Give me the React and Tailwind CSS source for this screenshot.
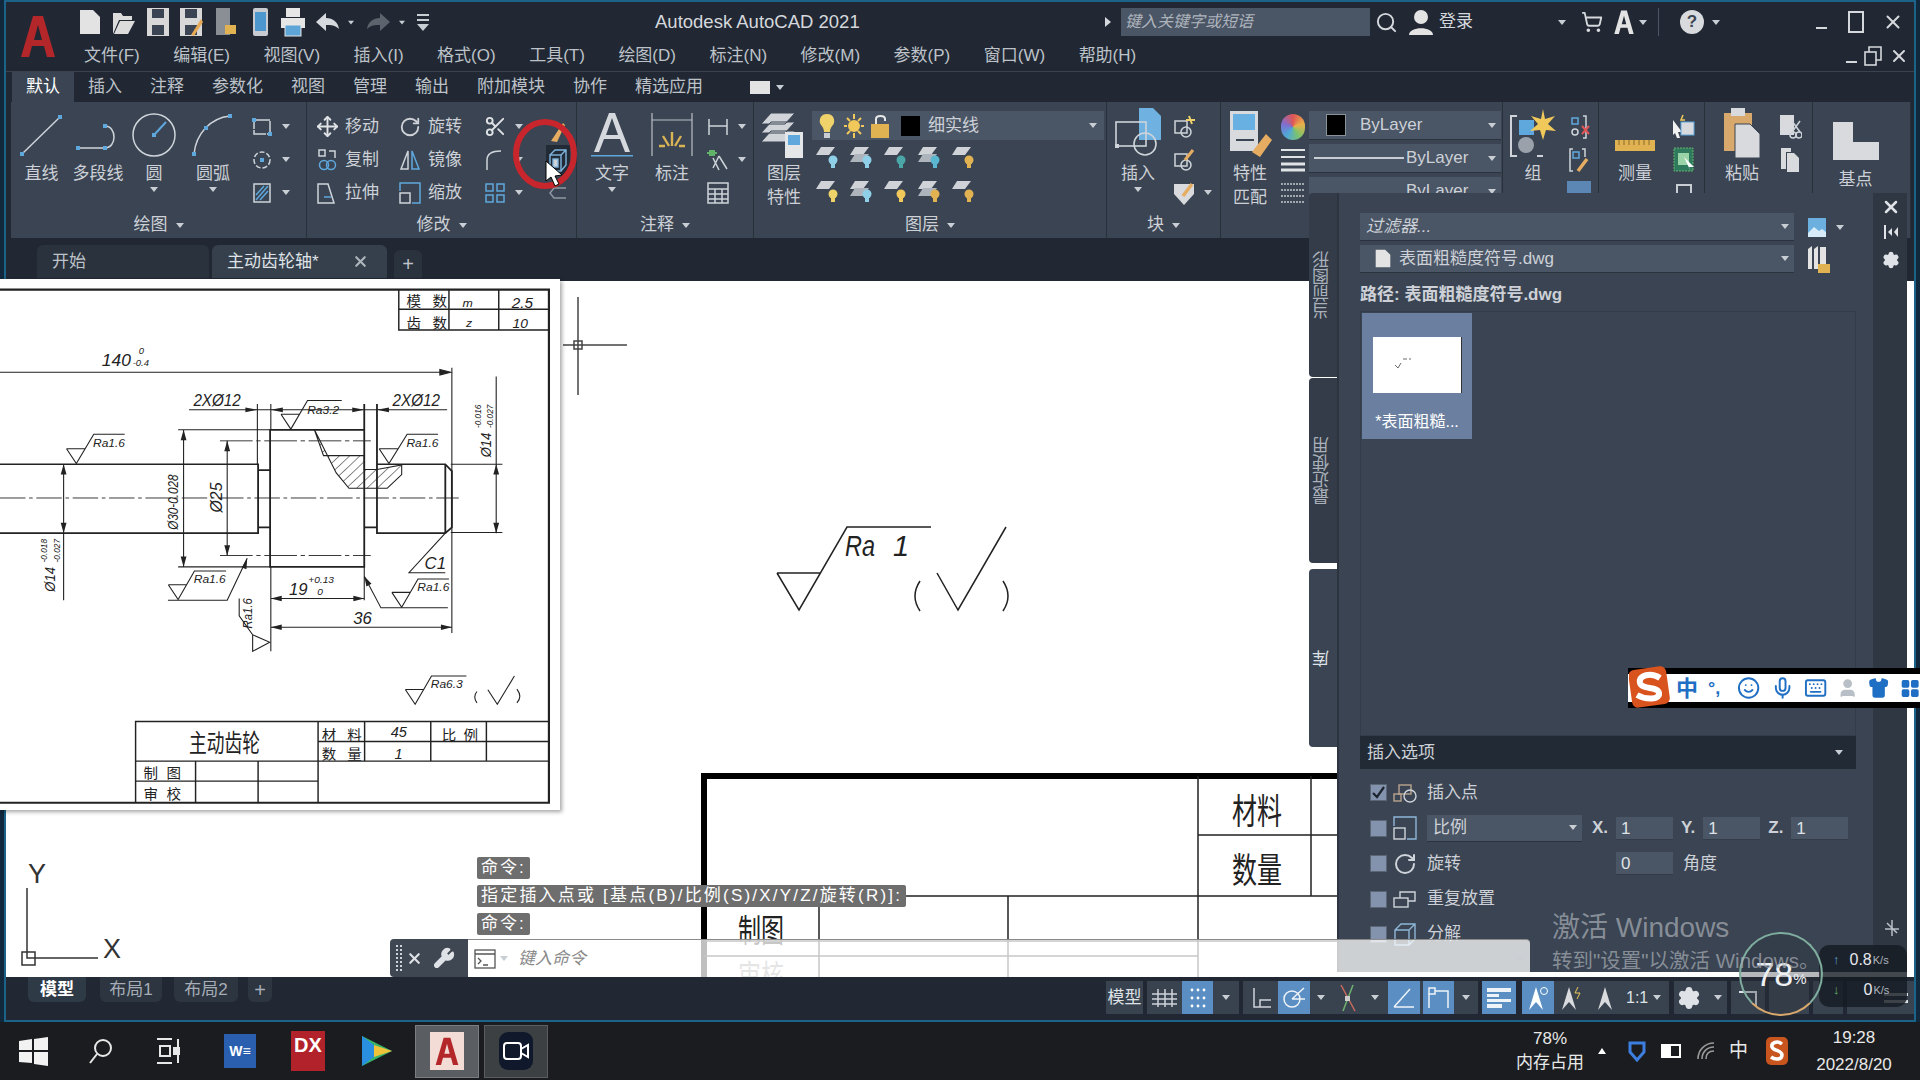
import React from "react";
import { Search, ShoppingCart, Wrench, Smile, Mic, Keyboard, Shirt, LayoutGrid, Settings, Scissors, X, Move, RotateCw, User } from "lucide-react";

const Caret = ({ className = "" }) => (
  <span className={"inline-block w-0 h-0 border-x-[4px] border-t-[5px] border-x-transparent border-t-[#c9ced5] " + className} />
);

const Svg = ({ w = 24, h = 24, children, sw = 1.5, color = "#cfd4da" }) => (
  <svg width={w} height={h} viewBox={`0 0 ${w} ${h}`} fill="none" stroke={color} strokeWidth={sw} className="shrink-0">
    {children}
  </svg>
);

const Node = ({ x, y }) => <rect x={x - 2} y={y - 2} width="4" height="4" fill="#5fa8dd" stroke="none" />;

const Logo = () => (
  <svg width="36" height="42" viewBox="0 0 36 42">
    <path d="M1 42 L13 1 H23 L35 42 H27 L24 31 H12 L9 42 Z M14 25 H22 L18 10 Z" fill="#b3262a" fillRule="evenodd" />
  </svg>
);

const Doc = ({ w = 22, h = 26, fill = "#e3e3e3" }) => (
  <svg width={w} height={h} viewBox="0 0 22 26"><path d="M1 1 H14 L21 8 V25 H1 Z" fill={fill} /></svg>
);

const Floppy = ({ pen }) => (
  <svg width="24" height="30" viewBox="0 0 24 30">
    <path d="M1 1 H23 V29 H1 Z" fill="#d8d8d8" />
    <rect x="6" y="2" width="12" height="9" fill="#3a4452" />
    <rect x="6" y="18" width="12" height="10" fill="#3a4452" />
    {pen && <path d="M12 28 L22 12 L24 15 L15 29 Z" fill="#e8a955" />}
  </svg>
);

const QuickIcons = () => (
  <div className="flex items-center h-full">
    <Doc w={24} h={26} />
    <svg className="ml-[10px]" width="23" height="26" viewBox="0 0 23 26"><path d="M1 4 H9 L11 7 H20 V11 H7 L1 25 Z M8 12 H23 L16 25 H2 Z" fill="#dcdcdc" /></svg>
    <div className="ml-[11px]"><Floppy /></div>
    <div className="ml-[9px]"><Floppy pen /></div>
    <svg className="ml-[12px]" width="22" height="30" viewBox="0 0 22 30"><rect x="1" y="1" width="14" height="27" fill="#8a8f96" /><rect x="10" y="18" width="11" height="9" fill="#e0b252" /></svg>
    <svg className="ml-[15px]" width="17" height="30" viewBox="0 0 17 30"><rect x="1" y="1" width="15" height="28" rx="2" fill="#c8ccd0" /><rect x="3" y="5" width="11" height="19" fill="#4d97cf" /></svg>
    <svg className="ml-[12px]" width="24" height="30" viewBox="0 0 24 30"><rect x="5" y="1" width="14" height="9" fill="#e6e6e6" /><rect x="0" y="11" width="24" height="10" fill="#e6e6e6" /><rect x="4" y="18" width="16" height="11" fill="#5fa6d8" stroke="#e6e6e6" /></svg>
    <svg className="ml-[11px]" width="23" height="20" viewBox="0 0 23 20"><path d="M0 10 L10 1 V6 C17 6 22 10 23 17 C19 13 15 13 10 13 V19 Z" fill="#d6d9dd" /></svg>
    <Caret className="ml-[8px] scale-75" />
    <svg className="ml-[12px]" width="23" height="20" viewBox="0 0 23 20"><path d="M23 10 L13 1 V6 C6 6 1 10 0 17 C4 13 8 13 13 13 V19 Z" fill="#5c636d" /></svg>
    <Caret className="ml-[8px] scale-75" />
    <svg className="ml-[11px]" width="12" height="18" viewBox="0 0 12 18"><path d="M0 1 H12 V3 H0 Z M0 6 H12 V8 H0 Z M0 11 H12 L6 18 Z" fill="#c9ced5" /></svg>
  </div>
);

const menus = ["文件(F)", "编辑(E)", "视图(V)", "插入(I)", "格式(O)", "工具(T)", "绘图(D)", "标注(N)", "修改(M)", "参数(P)", "窗口(W)", "帮助(H)"];
const tabs = ["默认", "插入", "注释", "参数化", "视图", "管理", "输出", "附加模块", "协作", "精选应用"];

const WinButtons = ({ small }) =>
  small ? (
    <div className="flex items-center gap-[7px] ml-auto mr-[5px] text-[#d5d8dc]">
      <span className="w-[11px] h-[2px] bg-[#d5d8dc] mt-[12px]" />
      <svg width="18" height="20" viewBox="0 0 18 20" fill="none" stroke="#d5d8dc" strokeWidth="1.6"><rect x="1" y="6" width="11" height="13" /><path d="M5 6 V1 H17 V14 H12" /></svg>
      <X size={20} strokeWidth={2.4} />
    </div>
  ) : (
    <div className="flex items-center text-[#d5d8dc]">
      <span className="w-[11px] h-[2px] bg-[#d5d8dc] mt-[12px]" />
      <span className="ml-[21px] w-[16px] h-[22px] border-2 border-[#d5d8dc]" />
      <X className="ml-[18px]" size={22} strokeWidth={2.2} />
    </div>
  );

const Panel = ({ label, className, children, noArrow }) => (
  <div className={"flex flex-col h-full bg-[#3a4452] border-r border-[#28303a] " + className}>
    <div className="flex h-[110px] pt-[8px]">{children}</div>
    <div className="h-[26px] flex items-center justify-center gap-[8px] text-[17px] text-[#cdd1d7]">
      {label}
      {!noArrow && <Caret />}
    </div>
  </div>
);

const BigTool = ({ icon, lines, arrow, className = "" }) => (
  <div className={"flex flex-col items-center shrink-0 " + className}>
    <div className="h-[48px] flex items-end justify-center">{icon}</div>
    <div className="mt-[4px] flex flex-col items-center text-[17px] leading-[24px] text-[#cdd1d7]">
      {lines.map((l) => (
        <span key={l}>{l}</span>
      ))}
      {arrow && <Caret className="mt-[1px]" />}
    </div>
  </div>
);

const Tool = ({ icon, label, caret }) => (
  <div className="flex items-center gap-[6px] h-[33px]">
    <div className="w-[24px] flex justify-center">{icon}</div>
    {label && <span className="text-[17px] text-[#cdd1d7]">{label}</span>}
    {caret && <Caret className="ml-[2px]" />}
  </div>
);

const LayerIcon = ({ accent = "#8fd0e8", second }) => (
  <svg width="26" height="24" viewBox="0 0 26 24">
    <path d="M6 2 H20 L14 10 H1 Z" fill="#cfd3d8" />
    {second && <path d="M6 9 H20 L14 17 H1 Z" fill="#aeb4bb" />}
    <circle cx="18" cy="15" r="4.5" fill={accent} />
    <rect x="16" y="19" width="4" height="4" fill={accent} />
  </svg>
);

const LayerRow = ({ accents }) => (
  <div className="flex h-[34px] items-center gap-[8px] pl-[3px]">
    {accents.map((a, i) => (
      <LayerIcon key={i} accent={a} second={i % 2 === 1} />
    ))}
  </div>
);

const Drop = ({ className = "", children }) => (
  <div className={"flex items-center bg-[#4a5565] border-b border-[#2a323d] text-[17px] text-[#cdd1d7] " + className}>
    {children}
    <Caret className="ml-auto mr-[5px]" />
  </div>
);

const Ribbon = () => (
  <div className="flex h-[136px] pl-[5px] shrink-0">
    <Panel label="绘图" className="w-[296px]">
      <BigTool className="w-[57px] ml-[2px]" lines={["直线"]} icon={<Svg w={46} h={46}><line x1="3" y1="42" x2="41" y2="5" /><Node x={3} y={42} /><Node x={41} y={5} /></Svg>} />
      <BigTool className="w-[56px]" lines={["多段线"]} icon={<Svg w={46} h={46}><path d="M3 36 H30 C42 36 42 14 30 14" /><Node x={3} y={36} /><Node x={30} y={36} /><Node x={30} y={14} /></Svg>} />
      <BigTool className="w-[56px]" lines={["圆"]} arrow icon={<Svg w={46} h={46}><circle cx="23" cy="23" r="21" /><path d="M23 23 L35 10" stroke="#5fa8dd" strokeWidth="2" /><Node x={23} y={23} /></Svg>} />
      <BigTool className="w-[62px]" lines={["圆弧"]} arrow icon={<Svg w={46} h={46}><path d="M4 42 C6 22 20 6 40 4" /><Node x={4} y={42} /><Node x={16} y={16} /><Node x={40} y={4} /></Svg>} />
      <div className="ml-[6px]">
        <Tool caret icon={<Svg w={22} h={22}><rect x="3" y="4" width="16" height="14" strokeDasharray="16 1" /><Node x={3} y={4} /><Node x={19} y={18} /></Svg>} />
        <Tool caret icon={<Svg w={22} h={22}><circle cx="11" cy="11" r="8" strokeDasharray="5 2" /><Node x={11} y={11} /></Svg>} />
        <Tool caret icon={<Svg w={22} h={24}><rect x="3" y="3" width="16" height="18" /><path d="M5 19 L17 5 M5 14 L13 5 M9 19 L17 10" stroke="#5fa8dd" /></Svg>} />
      </div>
    </Panel>
    <Panel label="修改" className="w-[270px]">
      <div className="grid grid-cols-[83px_85px_55px_40px] auto-rows-[33px] pl-[8px]">
        <Tool label="移动" icon={<Move size={23} color="#e0e3e6" strokeWidth={2} />} />
        <Tool label="旋转" icon={<RotateCw size={22} color="#d0d4d9" />} />
        <Tool caret icon={<Scissors size={23} color="#e0e3e6" />} />
        <div className="flex justify-center items-end h-[33px]"><svg width="18" height="22" viewBox="0 0 18 22"><path d="M2 20 L14 2 L16 4 L8 21 Z" fill="#e6ad62" /></svg></div>
        <Tool label="复制" icon={<Svg><rect x="4" y="2" width="6" height="6" /><circle cx="9" cy="17" r="4.5" stroke="#5fa8dd" /><circle cx="16" cy="17" r="4.5" stroke="#5fa8dd" /><path d="M14 3 H20 V10" /></Svg>} />
        <Tool label="镜像" icon={<Svg><path d="M10 3 L3 21 H10 Z" /><path d="M14 3 L21 21 H14 Z" stroke="#5fa8dd" /></Svg>} />
        <Tool caret icon={<Svg><path d="M4 22 V12 C4 6 9 3 18 3" /></Svg>} />
        <div className="flex justify-center items-center h-[33px]"><div className="w-[24px] h-[30px] bg-[#222a35] flex items-center justify-center"><svg width="18" height="24" viewBox="0 0 18 24" fill="none" stroke="#7fb6df" strokeWidth="1.4"><rect x="1" y="7" width="11" height="16" /><path d="M1 7 L6 2 H17 V17 L12 23 M12 7 L17 2" /><rect x="4" y="11" width="5" height="8" fill="#cfd4da" /></svg></div></div>
        <Tool label="拉伸" icon={<Svg><path d="M3 3 H13 L19 22 H3 Z" /><path d="M9 16 H16" stroke="#5fa8dd" /></Svg>} />
        <Tool label="缩放" icon={<Svg><rect x="2" y="12" width="10" height="10" /><path d="M2 10 V2 H22 V22 H14" stroke="#5fa8dd" /></Svg>} />
        <Tool caret icon={<Svg><rect x="3" y="3" width="7" height="7" stroke="#5fa8dd" /><rect x="14" y="3" width="7" height="7" stroke="#5fa8dd" /><rect x="3" y="14" width="7" height="7" stroke="#5fa8dd" /><rect x="14" y="14" width="7" height="7" stroke="#5fa8dd" /></Svg>} />
        <div className="flex justify-center items-center h-[33px]"><svg width="20" height="14" viewBox="0 0 20 14" fill="none" stroke="#8f98a3" strokeWidth="1.5"><path d="M18 2 H6 L2 7 L6 12 H18" /></svg></div>
      </div>
    </Panel>
    <Panel label="注释" className="w-[177px]">
      <BigTool className="w-[60px] ml-[5px]" lines={["文字"]} arrow icon={<svg width="46" height="48" viewBox="0 0 46 48"><path d="M5 42 L20 3 H26 L41 42 H36 L31 29 H15 L10 42 Z M17 25 H29 L23 8 Z" fill="#d5d8dc" fillRule="evenodd" /><rect x="2" y="45" width="42" height="1.5" fill="#5fa8dd" /></svg>} />
      <BigTool className="w-[56px] ml-[2px]" lines={["标注"]} icon={<Svg w={46} h={48} color="#b9bfc7" sw={1.2}><path d="M3 3 V46 M43 3 V46 M3 10 H43" /><path d="M23 22 V36 M14 26 L20 36 M32 26 L26 36 M10 36 H16 M30 36 H36" stroke="#d9b455" strokeWidth="2.4" /></Svg>} />
      <div className="ml-[6px]">
        <Tool caret icon={<Svg><path d="M3 4 V20 M21 4 V20 M3 11 H21" /></Svg>} />
        <Tool caret icon={<Svg><path d="M7 10 L13 22 M13 8 L21 21 M13 8 L7 20" /><path d="M4 3 H8 V7 H4 Z M1 5 H11" stroke="#63b26a" strokeWidth="2" /></Svg>} />
        <Tool icon={<Svg><rect x="2" y="2" width="20" height="20" /><path d="M2 8 H22 M2 13 H22 M2 18 H22 M9 8 V22 M16 8 V22" /></Svg>} />
      </div>
    </Panel>
    <Panel label="图层" className="w-[353px]">
      <BigTool className="w-[56px] ml-[2px]" lines={["图层", "特性"]} icon={<svg width="46" height="46" viewBox="0 0 46 46"><path d="M10 1 H34 L24 12 H0 Z M10 10 H34 L24 21 H0 Z M10 19 H34 L24 30 H0 Z" fill="#d0d3d7" stroke="#3a4452" /><rect x="24" y="20" width="18" height="26" fill="#e4e6e8" /><rect x="27" y="23" width="12" height="10" fill="#5fa8dd" /></svg>} />
      <div className="w-[292px]">
        <div className="flex items-center h-[29px] mt-[1px] bg-[#4a5565] text-[17px] text-[#cdd1d7]">
          <svg className="ml-[7px]" width="16" height="26" viewBox="0 0 16 26"><path d="M8 1 C14 1 16 6 15 10 C14 13 11 14 11 19 H5 C5 14 2 13 1 10 C0 6 2 1 8 1 Z" fill="#f0d26a" /><rect x="5" y="20" width="6" height="5" fill="#c9ced5" /></svg>
          <svg className="ml-[9px]" width="20" height="24" viewBox="0 0 20 24"><circle cx="10" cy="12" r="6" fill="#f0c95a" /><path d="M10 0 V5 M10 19 V24 M0 12 H3 M17 12 H20 M3 4 L6 7 M17 4 L14 7 M3 20 L6 17 M17 20 L14 17" stroke="#f0c95a" strokeWidth="2" /></svg>
          <svg className="ml-[7px]" width="18" height="24" viewBox="0 0 18 24"><rect x="0" y="10" width="18" height="14" fill="#e0b252" /><path d="M5 10 V5 C5 1 14 1 14 5 V7" stroke="#e8e8e8" strokeWidth="2" fill="none" /></svg>
          <span className="ml-[12px] w-[19px] h-[20px] bg-black" />
          <span className="ml-[8px]">细实线</span>
          <Caret className="ml-auto mr-[7px]" />
        </div>
        <LayerRow accents={["#8fd0e8", "#8fd0e8", "#4ba7a7", "#5bb6cf", "#e0b252"]} />
        <LayerRow accents={["#f0d26a", "#8fd0e8", "#f0c95a", "#e0b252", "#e0b252"]} />
      </div>
    </Panel>
    <Panel label="块" className="w-[114px]">
      <BigTool className="w-[62px]" lines={["插入"]} arrow icon={<svg width="46" height="50" viewBox="0 0 46 50" fill="none"><path d="M24 0 H38 L46 8 V32 H24 Z" fill="#6fb1e0" /><rect x="1" y="14" width="30" height="24" stroke="#cfd4da" strokeWidth="1.6" /><circle cx="30" cy="36" r="11" stroke="#cfd4da" strokeWidth="1.6" /><rect x="0" y="36" width="4" height="4" fill="#cfd4da" /></svg>} />
      <div className="ml-[3px]">
        <Tool icon={<Svg w={22} h={24}><rect x="2" y="6" width="12" height="12" /><circle cx="13" cy="17" r="5" /><path d="M16 1 L19 9 M13 5 L22 5" stroke="#f0d26a" strokeWidth="2" /></Svg>} />
        <Tool icon={<Svg w={22} h={24}><rect x="2" y="6" width="12" height="12" /><circle cx="13" cy="17" r="5" /><path d="M12 12 L20 2" stroke="#e6ad62" strokeWidth="3" /></Svg>} />
        <Tool caret icon={<svg width="22" height="26" viewBox="0 0 22 26"><path d="M1 4 H21 V14 L11 25 L1 14 Z" fill="#d8dadd" /><path d="M10 16 L19 4" stroke="#e6ad62" strokeWidth="3.5" /></svg>} />
      </div>
    </Panel>
    <Panel label="" noArrow className="w-[282px]">
      <BigTool className="w-[56px] ml-[1px]" lines={["特性", "匹配"]} icon={<svg width="44" height="48" viewBox="0 0 44 48"><rect x="2" y="1" width="28" height="40" fill="#d8dadd" /><rect x="5" y="4" width="22" height="16" fill="#69b0e2" /><path d="M8 30 H26" stroke="#3a4452" strokeWidth="2" /><path d="M24 42 L38 24 L44 30 L32 47 Z" fill="#e6ad62" /></svg>} />
      <div className="w-[24px] ml-[3px] flex flex-col items-center">
        <div className="h-[33px] flex items-center"><span className="w-[24px] h-[26px] rounded-full bg-[conic-gradient(#e05555,#e8b04a,#7fc46a,#4fa8d8,#7f6fd0,#e05555)]" /></div>
        <div className="h-[33px] flex items-center"><svg width="24" height="24" viewBox="0 0 24 24"><path d="M0 2 H24 M0 9 H24" stroke="#e0e3e6" strokeWidth="2" /><path d="M0 16 H24 M0 22 H24" stroke="#e0e3e6" strokeWidth="3" /></svg></div>
        <div className="h-[33px] flex items-center"><svg width="24" height="24" viewBox="0 0 24 24" stroke="#c3c8ce" strokeWidth="1.5" strokeDasharray="2 1"><path d="M0 3 H24 M0 9 H24 M0 15 H24 M0 21 H24" /></svg></div>
      </div>
      <div className="ml-[4px] w-[192px] flex flex-col gap-[4px] mt-[1px]">
        <Drop className="h-[29px]"><span className="ml-[17px] w-[20px] h-[22px] bg-black border border-[#8a929c]" /><span className="ml-[14px]">ByLayer</span></Drop>
        <Drop className="h-[29px]"><span className="ml-[5px] w-[90px] h-[2px] bg-[#c9ced5]" /><span className="ml-[2px]">ByLayer</span></Drop>
        <Drop className="h-[29px]"><span className="ml-[97px]">ByLayer</span></Drop>
      </div>
    </Panel>
    <Panel label="组" noArrow className="w-[96px]">
      <BigTool className="w-[60px]" lines={["组"]} icon={<svg width="48" height="50" viewBox="0 0 48 50" fill="none"><path d="M8 8 H2 V48 H8 M28 48 H34" stroke="#cfd4da" strokeWidth="2" /><rect x="10" y="12" width="15" height="15" fill="#5fa8dd" /><circle cx="17" cy="37" r="8" fill="#9aa1aa" /><path d="M34 1 L36 11 L46 8 L39 16 L47 23 L37 22 L34 32 L31 22 L21 23 L29 16 L22 8 L32 11 Z" fill="#f0c95a" /></svg>} />
      <div className="ml-[4px]">
        <Tool icon={<Svg w={22} h={26}><rect x="4" y="4" width="6" height="6" stroke="#5fa8dd" /><circle cx="7" cy="18" r="3" /><path d="M15 2 H18 V24 H15" /><path d="M14 12 L21 20 M21 12 L14 20" stroke="#e05555" strokeWidth="2" /></Svg>} />
        <Tool icon={<Svg w={22} h={26}><path d="M5 2 H2 V24 H5 M14 2 H17 V10" /><rect x="5" y="5" width="6" height="6" stroke="#5fa8dd" /><path d="M10 24 L19 12" stroke="#e6ad62" strokeWidth="3.5" /></Svg>} />
        <Tool icon={<div className="w-[26px] h-[24px] bg-[#5c86b3]" />} />
      </div>
    </Panel>
    <Panel label="" noArrow className="w-[106px]">
      <BigTool className="w-[66px] ml-[3px]" lines={["测量"]} icon={<svg width="42" height="38" viewBox="0 0 42 38"><rect x="1" y="20" width="40" height="11" fill="#e0b252" /><path d="M5 20 V25 M10 20 V25 M15 20 V25 M20 20 V25 M25 20 V25 M30 20 V25 M35 20 V25" stroke="#8a6a2a" /></svg>} />
      <div className="ml-[4px]">
        <Tool icon={<svg width="24" height="26" viewBox="0 0 24 26"><path d="M1 6 L10 18 L6 18 L8 24 L5 24 L3 19 L1 21 Z" fill="#f2f2f2" /><rect x="9" y="8" width="13" height="13" fill="#d8dadd" stroke="#5fa8dd" /><path d="M11 1 L9 6 L13 6" stroke="#f0c95a" strokeWidth="1.5" fill="none" /></svg>} />
        <Tool icon={<svg width="24" height="26" viewBox="0 0 24 26"><rect x="2" y="1" width="19" height="23" fill="#2f7a5d" stroke="#63b26a" strokeDasharray="2 1" /><rect x="6" y="6" width="11" height="12" fill="#9ad3a8" /><path d="M12 10 L22 20 L17 20 L19 25 Z" fill="#fff" /></svg>} />
        <Tool icon={<div className="w-[16px] h-[18px] border-2 border-[#c9ced5] bg-[#3a4452]" />} />
      </div>
    </Panel>
    <Panel label="" noArrow className="w-[108px]">
      <BigTool className="w-[68px] ml-[3px]" lines={["粘贴"]} icon={<svg width="38" height="50" viewBox="0 0 38 50"><rect x="1" y="5" width="28" height="38" fill="#d9a86c" /><rect x="8" y="0" width="14" height="8" fill="#d8dadd" /><path d="M12 16 H27 L37 26 V50 H12 Z" fill="#d8dadd" stroke="#3a4452" /></svg>} />
      <div className="ml-[2px]">
        <Tool icon={<Svg w={24} h={28}><rect x="2" y="2" width="14" height="20" fill="#d8dadd" stroke="none" /><circle cx="15" cy="22" r="3" /><circle cx="21" cy="22" r="3" /><path d="M14 19 L22 8 M22 19 L14 8" /></Svg>} />
        <Tool icon={<svg width="20" height="26" viewBox="0 0 20 26"><path d="M1 1 H11 V5 H6 V22 H1 Z" fill="#d8dadd" /><path d="M7 6 H14 L19 11 V25 H7 Z" fill="#d8dadd" /></svg>} />
      </div>
    </Panel>
    <Panel label="" noArrow className="w-[98px]">
      <div className="w-full flex flex-col items-center pr-[12px]">
        <svg className="mt-[12px]" width="46" height="38" viewBox="0 0 46 38"><path d="M0 0 H20 V20 H46 V38 H0 Z" fill="#d8dadd" /></svg>
        <span className="mt-[8px] text-[17px] leading-[24px] text-[#cdd1d7]">基点</span>
      </div>
    </Panel>
  </div>
);

const Ra = ({ a, b, c, t, tx, ty }) => (
  <g>
    <path d={`M${a[0] - 27} ${a[1] - 43} L${a[0]} ${a[1]} L${b[0]} ${b[1]} H${c} M${a[0] - 27} ${a[1] - 43} H${a[0] + 24}`} fill="none" stroke="#222" strokeWidth="3" />
    <text x={tx} y={ty} fontSize="33" fontStyle="italic" fill="#222" stroke="none">{t}</text>
  </g>
);

// parts drawing pasted onto the sheet, coordinates from the picture
const PartDrawing = () => (
  <svg viewBox="0 0 1568 1568" preserveAspectRatio="none" className="absolute left-0 top-[1px] w-[570px] h-[540px]" fontFamily="'Liberation Sans','Noto Sans CJK SC',sans-serif">
    <defs>
      <pattern id="hatch" width="20" height="20" patternUnits="userSpaceOnUse" patternTransform="rotate(45)">
        <line x1="0" y1="0" x2="0" y2="20" stroke="#222" strokeWidth="3" />
      </pattern>
    </defs>
    <g fill="none" stroke="#222" strokeWidth="3">
      <path d="M0 28 H1510 V1518 H0" strokeWidth="6" />
      <path d="M1097 28 V145 H1510 M1235 28 V145 M1372 28 V145 M1097 85 H1510" strokeWidth="4" />
      <path d="M0 268 H1225 M1243 255 V1025" />
      <path d="M1210 260 L1240 268 L1210 276 Z" fill="#222" />
      <path d="M0 535 H710 V735 H0 M710 552 H743 M710 718 H743 M743 435 H1002 V833 H743 Z M1002 718 H1037 M1002 550 V360 M1037 550 V360 M1037 535 H1225 L1243 555 V718 L1225 735 H1037 Z M1225 535 V735" strokeWidth="5" />
      <path d="M865 435 L890 510 H1002 V550 H1037 L1105 537 V565 L1065 605 H960 L925 560 Z" fill="url(#hatch)" stroke="#222" />
      <path d="M0 633 H1262" strokeDasharray="70 10 10 10" strokeWidth="2.5" />
      <path d="M605 467 H1020 M605 800 H1020" strokeDasharray="90 10 12 10" strokeWidth="2.5" />
      <path d="M520 377 H1230 M708 360 V535 M745 360 V435 M490 435 H743 M505 435 V833 M490 833 H743 M625 467 V800 M175 535 V930 M1365 280 V735 M1240 535 H1382 M1240 733 H1382" />
      <path d="M462 930 H625 L680 808 M1002 860 L1048 952 H1232 M1225 735 L1125 850 H1225 M745 925 H1002 M745 1008 H1243 M745 833 V1078 M1002 833 V930" />
      <path d="M695 1030 L742 1052 L695 1078 Z M695 1030 L658 975 V925" />
      <path d="M373 1518 V1282 H1510 M875 1282 V1518 M373 1397 H1510 M538 1397 V1518 M710 1397 V1518 M373 1455 H875 M1003 1282 V1397 M1185 1282 V1397 M1338 1282 V1397 M875 1340 H1510" strokeWidth="4" />
      <path d="M1312 1195 Q1300 1210 1312 1228 M1342 1190 L1368 1232 L1415 1150 M1422 1188 Q1438 1210 1422 1228" />
    </g>
    <g fill="#222">
      <path d="M505 435 L497 465 H513 Z M505 833 L497 803 H513 Z M625 467 L617 497 H633 Z M625 800 L617 770 H633 Z M175 535 L167 565 H183 Z M175 735 L167 705 H183 Z M1365 535 L1357 565 H1373 Z M1365 735 L1357 705 H1373 Z M745 925 L775 917 V933 Z M1002 925 L972 917 V933 Z M745 1008 L775 1000 V1016 Z M1243 1008 L1213 1000 V1016 Z M708 377 L675 370 V384 Z M745 377 L778 370 V384 Z M1002 377 L969 370 V384 Z M1037 377 L1070 370 V384 Z M680 808 L665 835 L678 840 Z M1002 860 L1008 890 L1022 882 Z" />
      <g fontStyle="italic">
        <text x="280" y="250" fontSize="48">140</text>
        <text x="382" y="215" fontSize="26">0</text>
        <text x="365" y="250" fontSize="26">-0.4</text>
        <text x="532" y="365" fontSize="46" textLength="130" lengthAdjust="spacingAndGlyphs">2XØ12</text>
        <text x="1080" y="365" fontSize="46" textLength="130" lengthAdjust="spacingAndGlyphs">2XØ12</text>
        <text x="795" y="915" fontSize="46">19</text>
        <text x="848" y="880" fontSize="28">+0.13</text>
        <text x="873" y="915" fontSize="28">0</text>
        <text x="972" y="998" fontSize="46">36</text>
        <text x="1168" y="840" fontSize="46">C1</text>
        <text x="1272" y="78" fontSize="34">m</text>
        <text x="1408" y="80" fontSize="42">2.5</text>
        <text x="1282" y="136" fontSize="34">z</text>
        <text x="1410" y="140" fontSize="38">10</text>
        <text transform="translate(490 725) rotate(-90)" fontSize="42" textLength="160" lengthAdjust="spacingAndGlyphs">Ø30-0.028</text>
        <text transform="translate(612 675) rotate(-90)" fontSize="46">Ø25</text>
        <text transform="translate(150 905) rotate(-90)" fontSize="38">Ø14</text>
        <text transform="translate(130 820) rotate(-90)" fontSize="24">-0.018</text>
        <text transform="translate(165 820) rotate(-90)" fontSize="24">-0.027</text>
        <text transform="translate(1350 515) rotate(-90)" fontSize="38">Ø14</text>
        <text transform="translate(1322 430) rotate(-90)" fontSize="24">-0.016</text>
        <text transform="translate(1355 430) rotate(-90)" fontSize="24">-0.027</text>
        <text transform="translate(692 1012) rotate(-90)" fontSize="33">Ra1.6</text>
      </g>
      <g fontSize="40">
        <text x="1118" y="75">模</text>
        <text x="1190" y="75">数</text>
        <text x="1118" y="138">齿</text>
        <text x="1190" y="138">数</text>
        <text x="885" y="1335">材</text>
        <text x="955" y="1335">料</text>
        <text x="885" y="1392">数</text>
        <text x="955" y="1392">量</text>
        <text x="1215" y="1335">比</text>
        <text x="1275" y="1335">例</text>
        <text x="395" y="1445">制</text>
        <text x="458" y="1445">图</text>
        <text x="395" y="1508">审</text>
        <text x="458" y="1508">校</text>
        <text x="520" y="1372" fontSize="72" textLength="195" lengthAdjust="spacingAndGlyphs">主动齿轮</text>
        <text x="1075" y="1328" fontStyle="italic">45</text>
        <text x="1085" y="1390" fontStyle="italic">1</text>
      </g>
    </g>
    <Ra a={[210, 533]} b={[258, 448]} c={343} t="Ra1.6" tx={256} ty={485} />
    <Ra a={[800, 433]} b={[846, 350]} c={940} t="Ra3.2" tx={845} ty={388} />
    <Ra a={[1070, 533]} b={[1120, 448]} c={1205} t="Ra1.6" tx={1118} ty={485} />
    <Ra a={[490, 928]} b={[535, 845]} c={622} t="Ra1.6" tx={533} ty={880} />
    <Ra a={[1105, 950]} b={[1150, 868]} c={1235} t="Ra1.6" tx={1148} ty={903} />
    <Ra a={[1142, 1232]} b={[1187, 1150]} c={1283} t="Ra6.3" tx={1185} ty={1185} />
  </svg>
);

const SheetDrawing = () => (
  <svg viewBox="0 280 1920 696" className="absolute left-[-6px] top-0 w-[1920px] h-[696px]" fontFamily="'Liberation Sans','Noto Sans CJK SC',sans-serif">
    <g fill="none" stroke="#222" strokeWidth="1.5">
      <path d="M777 572 L799 609 L847 526 H931 M777 572 H821" />
      <path d="M920 580 Q910 595 920 610 M937 572 L958 609 L1006 526 M1003 580 Q1013 595 1003 610" />
      <path d="M704 976 V775 H1345" stroke="#000" strokeWidth="6" />
      <path d="M1198 775 V976 M1311 775 V895 M1198 834 H1345 M704 895 H1345 M819 895 V976 M1008 895 V976 M704 940 H1345 M704 955 H1198" />
      <path d="M578 296 V394 M563 344 H627" stroke="#444" />
      <rect x="574" y="340" width="8" height="8" stroke="#444" />
      <path d="M27 887 V957 H98" stroke="#333" />
      <rect x="22" y="951" width="13" height="13" stroke="#333" />
    </g>
    <g fill="#222">
      <text x="845" y="555" fontSize="29" fontStyle="italic" textLength="30" lengthAdjust="spacingAndGlyphs">Ra</text>
      <text x="893" y="555" fontSize="29" fontStyle="italic">1</text>
      <text x="1232" y="823" fontSize="35" textLength="50" lengthAdjust="spacingAndGlyphs">材料</text>
      <text x="1232" y="882" fontSize="35" textLength="50" lengthAdjust="spacingAndGlyphs">数量</text>
      <text x="738" y="941" fontSize="32" textLength="46" lengthAdjust="spacingAndGlyphs">制图</text>
      <text x="738" y="985" fontSize="30" fill="#999" textLength="46" lengthAdjust="spacingAndGlyphs">审核</text>
      <text x="28" y="882" fontSize="27" fill="#333">Y</text>
      <text x="103" y="957" fontSize="27" fill="#333">X</text>
    </g>
  </svg>
);

const Status = ({ active, children, className = "" }) => (
  <div className={"h-[33px] flex items-center justify-center " + (active ? "bg-[#5b8fc4] " : "") + className}>{children}</div>
);

const SGroup = ({ children, className = "" }) => (
  <div className={"h-[33px] flex items-center bg-[#39434f] " + className}>{children}</div>
);

const StatusBar = () => (
  <div className="h-[44px] shrink-0 flex items-start justify-between">
    <div className="flex items-center h-[25px] pl-[22px] text-[17px] text-[#a7adb6]">
      <div className="w-[58px] h-full flex items-center justify-center bg-[#2f3a47] rounded-b-[6px] text-white font-bold">模型</div>
      <div className="ml-[14px] w-[62px] h-full flex items-center justify-center bg-[#2c3540] rounded-b-[6px]">布局1</div>
      <div className="ml-[12px] w-[64px] h-full flex items-center justify-center bg-[#2c3540] rounded-b-[6px]">布局2</div>
      <div className="ml-[10px] w-[24px] h-full flex items-center justify-center bg-[#2c3540] rounded-b-[6px] text-[20px]">+</div>
    </div>
    <div className="flex items-center gap-[4px] mt-[4px] text-[#dfe2e6]">
      <SGroup className="w-[37px] justify-center text-[17px]">模型</SGroup>
      <SGroup className="w-[92px]">
        <Svg w={35} h={24}><path d="M11 3 V21 M18 3 V21 M25 3 V21 M5 8 H30 M5 13 H30 M5 18 H30" /></Svg>
        <Status active className="w-[31px]"><svg width="18" height="22" viewBox="0 0 18 22" fill="#fff"><circle cx="3" cy="3" r="1.4" /><circle cx="9" cy="3" r="1.4" /><circle cx="15" cy="3" r="1.4" /><circle cx="3" cy="11" r="1.4" /><circle cx="9" cy="11" r="1.4" /><circle cx="15" cy="11" r="1.4" /><circle cx="3" cy="19" r="1.4" /><circle cx="9" cy="19" r="1.4" /><circle cx="15" cy="19" r="1.4" /></svg></Status>
        <Caret className="ml-[9px]" />
      </SGroup>
      <SGroup className="w-[235px]">
        <div className="w-[35px] flex justify-center"><Svg><path d="M5 2 V21 H22 M11 21 V14 H22" /></Svg></div>
        <Status active className="w-[32px]"><Svg color="#eef3f8"><circle cx="10" cy="13" r="8" /><path d="M10 13 L22 2 M10 13 H23" /></Svg></Status>
        <Caret className="ml-[7px]" />
        <div className="w-[42px] ml-[2px] flex justify-center"><svg width="18" height="28" viewBox="0 0 18 28" fill="none"><path d="M2 1 L16 27" stroke="#c96a5a" strokeWidth="1.5" /><path d="M14 1 L4 27" stroke="#6fb36f" strokeWidth="1.5" /><rect x="6" y="12" width="5" height="5" fill="#ccc" /></svg></div>
        <Caret className="ml-[2px]" />
        <Status active className="w-[32px] ml-[9px]"><Svg color="#eef3f8"><path d="M2 21 H22 M2 21 L18 3" /></Svg></Status>
        <Status active className="w-[31px] ml-[3px]"><Svg color="#eef3f8"><rect x="2" y="2" width="6" height="6" /><path d="M8 5 H21 V22 M2 8 V22" /></Svg></Status>
        <Caret className="ml-[8px]" />
      </SGroup>
      <Status active className="w-[34px]"><svg width="26" height="22" viewBox="0 0 26 22" fill="#eef3f8"><rect x="1" y="1" width="24" height="4" /><rect x="1" y="7" width="12" height="3" /><rect x="1" y="12" width="24" height="3" /><rect x="1" y="17" width="15" height="4" /></svg></Status>
      <SGroup className="w-[147px] ml-[2px]">
        <Status active className="w-[32px]"><svg width="24" height="26" viewBox="0 0 24 26"><path d="M10 2 L3 25 L10 17 L17 25 Z" fill="#fff" /><circle cx="18" cy="6" r="3.5" fill="none" stroke="#fff" /></svg></Status>
        <div className="w-[34px] flex justify-center"><svg width="24" height="26" viewBox="0 0 24 26"><path d="M10 2 L3 25 L10 17 L17 25 Z" fill="#d8dadd" /><path d="M19 2 L16 8 L21 8 L18 14" stroke="#f0c95a" fill="none" /></svg></div>
        <div className="w-[34px] flex justify-center"><svg width="18" height="26" viewBox="0 0 18 26"><path d="M9 2 L2 25 L9 17 L16 25 Z" fill="#d8dadd" /></svg></div>
        <span className="ml-[4px] text-[16px]">1:1</span>
        <Caret className="ml-[5px]" />
      </SGroup>
      <SGroup className="w-[53px] ml-[1px]">
        <Settings className="ml-[3px]" size={24} fill="#dfe2e6" color="#dfe2e6" />
        <Caret className="ml-[13px]" />
      </SGroup>
      <SGroup className="w-[34px] justify-center"><svg width="20" height="16" viewBox="0 0 20 16" fill="none" stroke="#dfe2e6" strokeWidth="2"><path d="M1 2 H18 V16" /></svg></SGroup>
      <SGroup className="w-[40px]" />
      <SGroup className="w-[30px]" />
      <SGroup className="w-[67px] justify-end pr-[6px]"><svg width="24" height="14" viewBox="0 0 24 14" fill="#dfe2e6"><rect y="2" width="24" height="3" /><rect y="9" width="24" height="3" /></svg></SGroup>
    </div>
  </div>
);

const Check = ({ checked }) => (
  <span className="w-[17px] h-[17px] bg-[#8393ad] border border-[#5b6675] flex items-center justify-center shrink-0">
    {checked && <svg width="13" height="13" viewBox="0 0 13 13" fill="none" stroke="#1c2430" strokeWidth="2.2"><path d="M1 7 L5 11 L12 1" /></svg>}
  </span>
);

const Field = ({ value, className = "" }) => (
  <span className={"h-[23px] w-[57px] bg-[#4a5565] border-b border-[#333c48] pl-[5px] text-[17px] leading-[23px] text-[#dfe2e6] " + className}>{value}</span>
);

const Palette = () => (
  <div className="absolute left-[1309px] top-[193px] h-[779px] flex text-[#cdd1d7]">
    <div className="w-[28px] flex flex-col text-[#aab1bb] text-[17px]">
      <div className="h-[184px] bg-[#333c48] rounded-l-[4px] flex items-center justify-center"><span className="[writing-mode:vertical-rl] rotate-180">当前图形</span></div>
      <div className="h-[185px] mt-[1px] bg-[#333c48] rounded-l-[4px] flex items-center justify-center"><span className="[writing-mode:vertical-rl] rotate-180">最近使用</span></div>
      <div className="h-[178px] mt-[6px] bg-[#3a4452] rounded-l-[4px] flex items-center justify-center"><span className="[writing-mode:vertical-rl] rotate-180 text-[#dfe2e6]">库</span></div>
    </div>
    <div className="w-[536px] bg-[#3a4452] border-l-2 border-[#2c343f] pl-[21px] pr-[17px] pt-[20px] flex flex-col">
      <div className="flex items-center">
        <Drop className="w-[434px] h-[28px] italic text-[#aeb4bc]"><span className="ml-[6px]">过滤器...</span></Drop>
        <svg className="ml-[14px]" width="18" height="19" viewBox="0 0 18 19"><rect width="18" height="19" fill="#6bb0de" /><path d="M0 15 L6 9 L11 13 L14 11 L18 14 V19 H0 Z" fill="#d7ecf8" /></svg>
        <Caret className="ml-[10px]" />
      </div>
      <div className="flex items-center mt-[4px]">
        <Drop className="w-[434px] h-[28px]"><span className="ml-[13px]"><Doc w={20} h={19} /></span><span className="ml-[6px]">表面粗糙度符号.dwg</span></Drop>
        <svg className="ml-[12px]" width="24" height="28" viewBox="0 0 24 28"><path d="M2 4 L6 1 V24 H2 Z M8 4 L12 1 V24 H8 Z M14 2 H20 V22 H14 Z" fill="#e3e3e3" /><rect x="12" y="19" width="12" height="9" fill="#e0b252" /></svg>
      </div>
      <div className="mt-[10px] h-[23px] text-[17px] leading-[23px] font-bold">路径: 表面粗糙度符号.dwg</div>
      <div className="mt-[5px] h-[425px] border border-[#333c48] p-[1px]">
        <div className="w-[110px] h-[126px] bg-[#6b80a0] pt-[24px] flex flex-col items-center">
          <div className="w-[89px] h-[56px] bg-white border-r border-[#333] relative">
            <svg className="absolute left-[20px] top-[20px]" width="20" height="12" viewBox="0 0 20 12" fill="none" stroke="#444" strokeWidth="0.8"><path d="M2 8 L5 11 L8 6 M10 2 H14 M16 2 H18" /></svg>
          </div>
          <span className="mt-[17px] text-[16px] text-white whitespace-nowrap">*表面粗糙...</span>
        </div>
      </div>
      <div className="h-[33px] bg-[#222a35] flex items-center justify-between pl-[7px] pr-[13px] text-[17px]">插入选项<Caret /></div>
      <div className="pl-[10px] pt-[6px] text-[17px]">
        <div className="h-[35px] flex items-center">
          <Check checked />
          <svg className="ml-[6px]" width="24" height="20" viewBox="0 0 24 20" fill="none" stroke="#b9a48f" strokeWidth="1.4"><rect x="6" y="2" width="12" height="9" /><rect x="1" y="11" width="7" height="7" /><circle cx="17" cy="13" r="6" stroke="#cfd4da" /></svg>
          <span className="ml-[10px]">插入点</span>
        </div>
        <div className="h-[36px] flex items-center">
          <Check />
          <svg className="ml-[6px]" width="24" height="24" viewBox="0 0 24 24" fill="none" stroke="#cfd4da" strokeWidth="1.4"><rect x="1" y="12" width="11" height="11" /><path d="M1 10 V1 H23 V23 H14" stroke="#8fb6d8" /></svg>
          <Drop className="w-[155px] h-[27px] ml-[10px]"><span className="ml-[6px]">比例</span></Drop>
          <span className="ml-[10px] font-bold">X.</span><Field value="1" className="ml-[8px]" />
          <span className="ml-[8px] font-bold">Y.</span><Field value="1" className="ml-[8px]" />
          <span className="ml-[8px] font-bold">Z.</span><Field value="1" className="ml-[8px]" />
        </div>
        <div className="h-[35px] flex items-center">
          <Check />
          <RotateCw className="ml-[6px]" size={24} color="#cfd4da" />
          <span className="ml-[10px] w-[189px]">旋转</span>
          <Field value="0" />
          <span className="ml-[10px]">角度</span>
        </div>
        <div className="h-[36px] flex items-center">
          <Check />
          <svg className="ml-[6px]" width="24" height="22" viewBox="0 0 24 22" fill="none" stroke="#cfd4da" strokeWidth="1.4"><rect x="1" y="10" width="14" height="9" /><path d="M7 10 V4 H22 V13 H15" /></svg>
          <span className="ml-[10px]">重复放置</span>
        </div>
        <div className="h-[34px] flex items-center">
          <Check />
          <svg className="ml-[6px]" width="24" height="24" viewBox="0 0 24 24" fill="none" stroke="#8fb6d8" strokeWidth="1.4"><path d="M2 8 L8 2 H22 V17 L16 23 H2 Z M2 8 H16 V23 M16 8 L22 2" /></svg>
          <span className="ml-[10px]">分解</span>
        </div>
      </div>
    </div>
    <div className="w-[34px] bg-[#2e3742] flex flex-col items-center pt-[4px] text-[#dfe2e6]">
      <X size={20} strokeWidth={3} className="ml-[2px]" />
      <svg className="mt-[8px] ml-[2px]" width="14" height="14" viewBox="0 0 14 14" fill="#dfe2e6"><rect x="0" y="0" width="2" height="14" /><path d="M4 7 L8 3 V11 Z M14 2 V12 L10 7 Z" /></svg>
      <Settings size={18} className="mt-[12px] ml-[2px]" fill="#dfe2e6" />
      <svg className="mt-[650px] ml-[4px]" width="18" height="18" viewBox="0 0 18 18" fill="none" stroke="#b9bfc7" strokeWidth="1.5"><path d="M9 1 V17 M2 10 H16 M4 4 L14 14" /></svg>
    </div>
  </div>
);

const CommandLine = () => (
  <>
    <div className="absolute left-[477px] top-[857px] flex flex-col items-start gap-[6px] text-[17px] leading-[22px] text-white">
      <span className="px-[4px] rounded-[2px] bg-[#6e6e6e] tracking-[2px]">命令:</span>
      <span className="px-[4px] rounded-[2px] bg-[#6e6e6e] tracking-[2.2px]">指定插入点或 [基点(B)/比例(S)/X/Y/Z/旋转(R)]:</span>
      <span className="px-[4px] rounded-[2px] bg-[#6e6e6e] tracking-[2px]">命令:</span>
    </div>
    <div className="absolute left-[390px] top-[939px] w-[1140px] h-[38px] flex">
      <div className="w-[78px] bg-[#3f4753] rounded-l-[4px] flex items-center text-[#dfe2e6]">
        <span className="ml-[6px] w-[6px] h-[26px] border-x-2 border-dotted border-[#cfd4da]" />
        <X className="ml-[4px]" size={17} strokeWidth={3} />
        <Wrench className="ml-[10px]" size={22} fill="#dfe2e6" />
      </div>
      <div className="flex-1 bg-white/75 flex items-center border-t border-[#8a8a8a] rounded-r-[4px]">
        <svg className="ml-[6px]" width="22" height="22" viewBox="0 0 22 22" fill="none" stroke="#555" strokeWidth="1.3"><rect x="1" y="2" width="20" height="18" /><path d="M1 6 H21 M4 10 L7 13 L4 16 M9 17 H14" /></svg>
        <Caret className="ml-[4px] border-t-[#666]" />
        <span className="ml-[10px] italic text-[17px] text-[#8a8a8a]">键入命令</span>
        <Caret className="ml-auto mr-[6px] rotate-180 border-t-[#666]" />
      </div>
    </div>
  </>
);

const Sogou = () => (
  <div className="absolute left-[1628px] top-[668px] w-[292px] h-[40px] bg-black py-[6px] flex">
    <div className="bg-white w-full flex items-center pl-[48px] gap-[10px] text-[#1f6fc4]">
      <span className="text-[22px] font-bold">中</span>
      <span className="text-[18px] font-bold w-[20px]">°,</span>
      <Smile size={24} />
      <Mic size={24} />
      <Keyboard size={24} />
      <User size={22} color="#b9bfc7" fill="#b9bfc7" />
      <Shirt size={22} fill="#1f6fc4" />
      <LayoutGrid size={21} fill="#1f6fc4" />
    </div>
    <svg className="absolute left-[1px] top-[-2px]" width="42" height="44" viewBox="0 0 42 44"><rect x="1" y="2" width="38" height="38" rx="6" fill="#d9531e" transform="rotate(-8 20 20)" /><path d="M31 12 C22 6 9 9 11 17 C13 24 29 20 30 27 C31 34 17 34 8 29" fill="none" stroke="#fff" strokeWidth="6" /></svg>
  </div>
);

const SpeedWidget = () => (
  <div className="absolute left-[1739px] top-[932px] w-[170px] h-[86px]">
    <div className="absolute left-[80px] top-[13px] w-[88px] h-[62px] bg-[#141a22]/80 rounded-[10px] text-[#e6e8eb] pl-[14px]">
      <div className="h-[30px] flex items-center gap-[10px] text-[16px]"><span className="text-[#5fa8dd] text-[13px]">↑</span>0.8<span className="text-[11px] -ml-[9px] text-[#aeb4bc]">K/s</span></div>
      <div className="h-[30px] flex items-center gap-[12px] text-[16px]"><span className="text-[#63b26a] text-[13px]">↓</span><span className="ml-[12px]">0</span><span className="text-[11px] -ml-[11px] text-[#aeb4bc]">K/s</span></div>
    </div>
    <div className="absolute left-0 top-0 w-[84px] h-[84px] rounded-full bg-[#2a323d]/35 border-2 border-[#7fae9f] border-b-[#d9a86c] flex items-center justify-center text-[#eef0f2]">
      <span className="text-[34px] font-light">78</span><span className="text-[15px] mt-[10px]">%</span>
    </div>
  </div>
);

const Watermark = () => (
  <div className="absolute left-[1552px] top-[910px] text-[#a9afb6]/70 pointer-events-none whitespace-nowrap">
    <div className="text-[28px] leading-[36px]">激活 Windows</div>
    <div className="text-[20.5px] leading-[30px]">转到"设置"以激活 Windows。</div>
  </div>
);

const Taskbar = () => (
  <div className="h-[58px] bg-[#1b1c1f] flex items-center text-[#e8e8e8] shrink-0 [&>*]:shrink-0">
    <svg className="ml-[19px]" width="29" height="29" viewBox="0 0 29 29" fill="#f2f2f2"><path d="M0 4 L13 2 V13 H0 Z M15 2 L29 0 V13 H15 Z M0 15 H13 V26 L0 25 Z M15 15 H29 V29 L15 27 Z" /></svg>
    <svg className="ml-[41px]" width="24" height="26" viewBox="0 0 24 26" fill="none" stroke="#e8e8e8" strokeWidth="2"><circle cx="14" cy="10" r="8" /><path d="M8 16 L1 25" /></svg>
    <svg className="ml-[43px]" width="24" height="26" viewBox="0 0 24 26" fill="none" stroke="#e8e8e8" strokeWidth="2"><path d="M1 1 H16 M1 25 H16 M4 8 H14 V18 H4 Z M22 1 V25" /><rect x="18" y="10" width="5" height="6" fill="#e8e8e8" /></svg>
    <div className="ml-[44px] w-[32px] h-[34px] bg-[#2a5fb0] flex items-center justify-center text-white text-[14px] font-bold">W≡</div>
    <div className="ml-[35px] w-[34px] h-[40px] bg-[#b2222a] flex items-start justify-center text-white text-[20px] font-bold leading-[28px]">DX</div>
    <svg className="ml-[34px]" width="36" height="36" viewBox="0 0 36 36"><path d="M3 3 L33 18 L3 33 Z" fill="#38b36a" /><path d="M3 3 L15 12 V24 L3 33 Z" fill="#2a8fe0" /><path d="M15 12 L33 18 L15 24 Z" fill="#f0c23a" /></svg>
    <div className="ml-[20px] w-[64px] h-[53px] bg-[#5a5e62] border border-[#7a7e82] flex items-center justify-center">
      <div className="w-[34px] h-[38px] bg-[#f2dcd5] flex items-center justify-center"><svg width="24" height="30" viewBox="0 0 36 42"><path d="M1 42 L13 1 H23 L35 42 H27 L24 31 H12 L9 42 Z M14 25 H22 L18 10 Z" fill="#b3262a" fillRule="evenodd" /></svg></div>
    </div>
    <div className="ml-[5px] w-[64px] h-[53px] bg-[#3c4043] border border-[#5a5e62] flex items-center justify-center">
      <div className="w-[34px] h-[38px] rounded-[9px] bg-[#10192b] flex items-center justify-center"><svg width="26" height="20" viewBox="0 0 26 20" fill="none" stroke="#fff" strokeWidth="2"><rect x="1" y="2" width="17" height="16" rx="3" /><path d="M18 8 L25 4 V16 L18 12" /></svg></div>
    </div>
    <div className="ml-[957px] w-[90px] text-center text-[17px] leading-[24px] whitespace-nowrap">
      <div>78%</div>
      <div>内存占用</div>
    </div>
    <span className="ml-[3px] w-0 h-0 border-x-[4px] border-b-[6px] border-x-transparent border-b-white" />
    <svg className="ml-[22px]" width="18" height="22" viewBox="0 0 18 22" fill="none" stroke="#3d7fe0" strokeWidth="3"><path d="M2 3 H16 V12 L9 20 L2 12 Z" /></svg>
    <span className="ml-[15px] w-[20px] h-[14px] border-2 border-white"><span className="block w-[8px] h-full bg-white" /></span>
    <svg className="ml-[15px]" width="20" height="20" viewBox="0 0 20 20" fill="none" stroke="#9a9a9a" strokeWidth="1.6"><path d="M2 18 C2 9 9 2 18 2 M6 18 C6 11 11 6 18 6 M10 18 C10 13 13 10 18 10" /></svg>
    <span className="ml-[13px] text-[19px]">中</span>
    <svg className="ml-[18px]" width="22" height="28" viewBox="0 0 22 28"><rect width="22" height="28" rx="5" fill="#c8541e" /><path d="M16 7 C11 3 5 6 6 10 C7 14 16 13 16 18 C16 23 9 23 5 20" fill="none" stroke="#fff" strokeWidth="3.5" /></svg>
    <div className="ml-[21px] w-[90px] text-center text-[17px] leading-[27px]">
      <div>19:28</div>
      <div>2022/8/20</div>
    </div>
  </div>
);

export default function App() {
  return (
    <div className="relative w-[1920px] h-[1080px] overflow-hidden flex flex-col bg-[#12283c] [font-family:'Liberation_Sans','Noto_Sans_CJK_SC',sans-serif]">
      <div className="mx-[4px] h-[1022px] shrink-0 border-2 border-[#1b6389] bg-[#212833] flex flex-col">
        <div className="flex h-[70px] shrink-0 border-b border-[#39424e]">
          <div className="w-[72px] pl-[14px] pt-[13px]"><Logo /></div>
          <div className="flex-1 flex flex-col">
            <div className="h-[38px] flex items-center text-[#d5d8dc] pt-[2px]">
              <QuickIcons />
              <span className="ml-[226px] w-[200px] text-[18.5px] whitespace-nowrap">Autodesk AutoCAD 2021</span>
              <span className="ml-[250px] w-0 h-0 border-y-[5px] border-l-[6px] border-y-transparent border-l-[#d5d8dc]" />
              <div className="ml-[10px] w-[249px] h-[28px] bg-[#4a5565] flex items-center pl-[4px] italic text-[16px] text-[#aeb4bc]">键入关键字或短语</div>
              <Search className="ml-[5px]" size={23} strokeWidth={2} />
              <svg className="ml-[11px]" width="24" height="26" viewBox="0 0 24 26" fill="#e3e3e3"><circle cx="12" cy="8" r="7" /><path d="M0 26 C0 17 24 17 24 26 Z" /></svg>
              <span className="ml-[6px] text-[17px]">登录</span>
              <Caret className="ml-[85px]" />
              <ShoppingCart className="ml-[15px]" size={22} />
              <svg className="ml-[9px]" width="24" height="24" viewBox="0 0 36 42"><path d="M1 42 L13 1 H23 L35 42 H27 L24 31 H12 L9 42 Z M14 25 H22 L18 10 Z" fill="#e3e3e3" fillRule="evenodd" /></svg>
              <Caret className="ml-[3px]" />
              <span className="ml-[11px] w-px h-[28px] bg-[#4a5565]" />
              <span className="ml-[21px] w-[24px] h-[24px] rounded-full bg-[#d8dadd] text-[#3a4452] text-[17px] font-bold flex items-center justify-center">?</span>
              <Caret className="ml-[8px]" />
              <div className="ml-[96px]"><WinButtons /></div>
            </div>
            <div className="flex items-center h-[31px] pl-[6px] gap-[33.5px] text-[17px] text-[#bdc2c9]">
              {menus.map((m) => (
                <span key={m}>{m}</span>
              ))}
              <WinButtons small />
            </div>
          </div>
        </div>
        <div className="flex h-[30px] items-center pl-[6px] shrink-0 text-[17px] text-[#bdc2c9]">
          {tabs.map((t, i) => (
            <span key={t} className={"h-full flex items-center px-[14px] " + (i === 0 ? "bg-[#3a4452] text-white" : "")}>{t}</span>
          ))}
          <span className="ml-[33px] w-[20px] h-[13px] bg-[#e3e3e3]" />
          <Caret className="ml-[6px]" />
        </div>
        <Ribbon />
        <div className="h-[43px] shrink-0 flex items-end pb-[3px] pl-[31px] text-[17px] text-[#bdc2c9]">
          <div className="w-[172px] h-[33px] bg-[#2a323d] rounded-t-[6px] flex items-center pl-[15px]">开始</div>
          <div className="ml-[3px] w-[175px] h-[33px] bg-[#36404c] rounded-t-[6px] flex items-center pl-[15px] text-[#dfe2e6]">
            主动齿轮轴*
            <X className="ml-auto mr-[18px]" size={17} strokeWidth={3} color="#aeb4bc" />
          </div>
          <div className="ml-[7px] w-[28px] h-[28px] bg-[#2a323d] rounded-t-[6px] flex items-center justify-center text-[20px]">+</div>
        </div>
        <div className="relative h-[696px] shrink-0 bg-white overflow-hidden">
          <SheetDrawing />
        </div>
        <StatusBar />
      </div>
      <Taskbar />
      <div className="absolute left-0 top-[279px] w-[560px] h-[531px] bg-white shadow-[2px_2px_4px_rgba(0,0,0,0.35)] overflow-hidden">
        <PartDrawing />
      </div>
      <Palette />
      <CommandLine />
      <Sogou />
      <SpeedWidget />
      <Watermark />
      <svg className="absolute left-[512px] top-[118px]" width="66" height="72" viewBox="0 0 66 72" fill="none"><ellipse cx="33" cy="36" rx="29" ry="32" stroke="#c8262c" strokeWidth="6" /></svg>
      <svg className="absolute left-[545px] top-[160px]" width="18" height="27" viewBox="0 0 18 27"><path d="M1 1 V21 L6 17 L10 26 L14 24 L10 16 L17 15 Z" fill="#fff" stroke="#000" /></svg>
    </div>
  );
}
